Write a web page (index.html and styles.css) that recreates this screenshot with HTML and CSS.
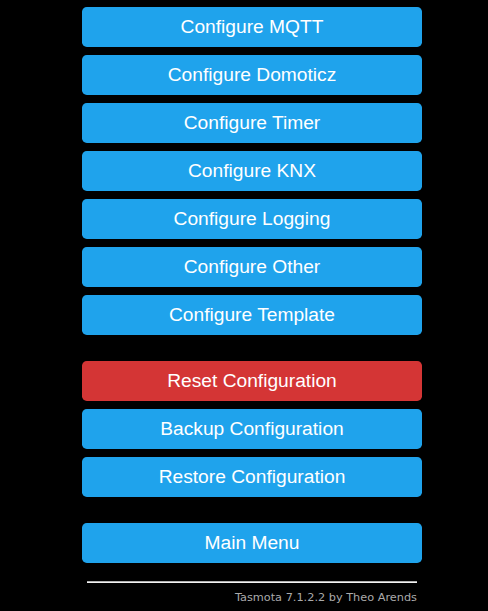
FILE: index.html
```html
<!DOCTYPE html>
<html>
<head>
    <meta charset="UTF-8">
    <title>Tasmota - Configuration</title>
    <link rel="stylesheet" href="styles.css">
</head>
<body>
    <div class="container">
        <div class="menu">
            <button class="btn">Configure MQTT</button>
            <button class="btn">Configure Domoticz</button>
            <button class="btn">Configure Timer</button>
            <button class="btn">Configure KNX</button>
            <button class="btn">Configure Logging</button>
            <button class="btn">Configure Other</button>
            <button class="btn">Configure Template</button>
        </div>

        <div class="menu">
            <button class="btn btn-red">Reset Configuration</button>
            <button class="btn">Backup Configuration</button>
            <button class="btn">Restore Configuration</button>
        </div>

        <div class="menu">
            <button class="btn">Main Menu</button>
        </div>

        <div class="footer">
            <hr>
            <a href="#">Tasmota 7.1.2.2 by Theo Arends</a>
        </div>
    </div>
</body>
</html>
```

FILE: styles.css
```css
body {
    margin: 0;
    background: #000;
    color: #eaeaea;
    font-family: 'DejaVu Sans', Verdana, sans-serif;
}

.container {
    width: 340px;
    margin: 7px 0 0 82px;
    display: flex;
    flex-direction: column;
    gap: 26px;
}

.menu {
    display: flex;
    flex-direction: column;
    gap: 8px;
}

.btn {
    border: 0;
    border-radius: 0.3rem;
    background: #1fa3ec;
    color: #fff;
    height: 40px;
    line-height: 40px;
    padding: 0;
    font-size: 19.2px;
    font-family: 'Liberation Sans', Arial, sans-serif;
    width: 100%;
    cursor: pointer;
}

.btn-red {
    background: #d43535;
}

.footer {
    margin-top: -8px;
    text-align: right;
    font-size: 11.3px;
    padding-right: 5px;
}

.footer hr {
    margin: 0 0 8px 5px;
    border: 0;
    border-top: 1px solid #b0b0b0;
    border-bottom: 1px solid #f2f2f2;
}

.footer a {
    color: #aaa;
    text-decoration: none;
}
```
